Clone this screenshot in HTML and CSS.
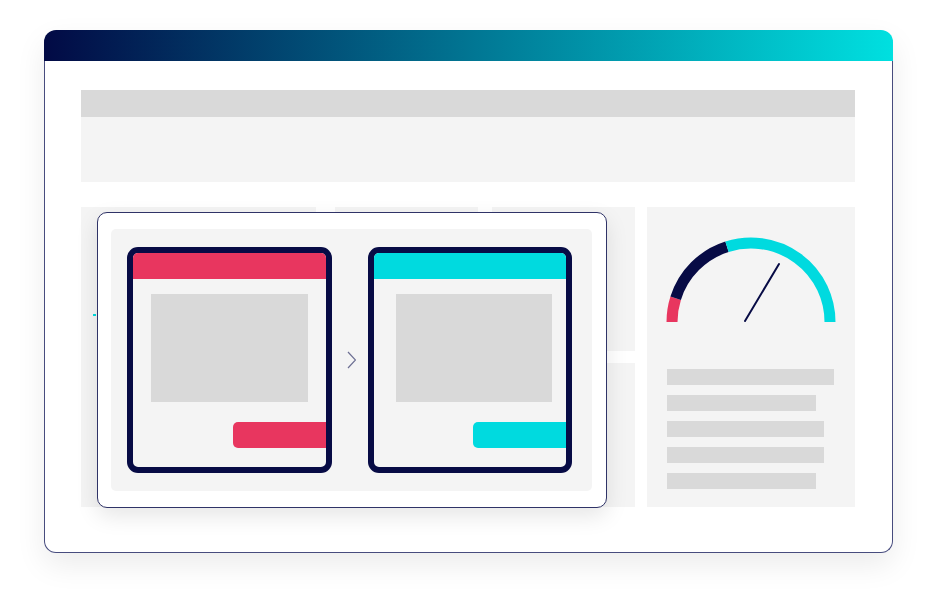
FILE: index.html
```html
<!DOCTYPE html>
<html lang="en">
<head>
<meta charset="utf-8">
<title>Dashboard illustration</title>
<link rel="stylesheet" href="styles.css">
</head>
<body>
<div class="window">
  <div class="win-head"></div>
  <div class="win-body">
    <div class="banner">
      <div class="banner-top"></div>
      <div class="banner-rest"></div>
    </div>
    <div class="grid">
      <div class="tile tile-a"><div class="dot"></div></div>
      <div class="tile tile-b"></div>
      <div class="tile tile-c"></div>
      <div class="tile tile-d"></div>
      <div class="tile tile-gauge">
        <svg class="gauge" width="208" height="125" viewBox="0 0 208 125">
          <path d="M25 115 A79 79 0 0 1 28.66 91.24" fill="none" stroke="#e8365f" stroke-width="11"/>
          <path d="M28.66 91.24 A79 79 0 0 1 80 39.74" fill="none" stroke="#070b45" stroke-width="11"/>
          <path d="M80 39.74 A79 79 0 0 1 183 115" fill="none" stroke="#00dadf" stroke-width="11"/>
          <line x1="98" y1="114" x2="132" y2="57" stroke="#070b45" stroke-width="2" stroke-linecap="round"/>
        </svg>
        <div class="bars">
          <div class="bar w167"></div>
          <div class="bar w149"></div>
          <div class="bar w157"></div>
          <div class="bar w157"></div>
          <div class="bar w149"></div>
        </div>
      </div>
      <div class="popup">
        <div class="panel">
          <div class="phone phone-pink">
            <div class="phone-head"></div>
            <div class="phone-img"></div>
            <div class="phone-btn"></div>
          </div>
          <svg class="chev" width="9" height="18" viewBox="0 0 9 18">
            <polyline points="1,1 8.5,9 1,17" fill="none" stroke="#6d6f93" stroke-width="1.2"/>
          </svg>
          <div class="phone phone-cyan">
            <div class="phone-head"></div>
            <div class="phone-img"></div>
            <div class="phone-btn"></div>
          </div>
        </div>
      </div>
    </div>
  </div>
</div>
</body>
</html>
```

FILE: styles.css
```css
* { box-sizing: border-box; }
html, body { margin: 0; padding: 0; background: #ffffff; }
body { width: 939px; height: 600px; overflow: hidden; font-family: "Liberation Sans", Arial, sans-serif; }

.window {
  width: 849px;
  margin: 30px 0 0 44px;
  border-radius: 12px;
  box-shadow: 0 12px 30px rgba(0, 0, 0, 0.08);
}
.win-head {
  height: 31px;
  border-radius: 12px 12px 0 0;
  background: linear-gradient(90deg, #020a45 0%, #00e0e0 100%);
}
.win-body {
  background: #ffffff;
  border: 1px solid #474c7e;
  border-top: 0;
  border-radius: 0 0 12px 12px;
  padding: 29px 37px 45px 36px;
}

.banner { display: flex; flex-direction: column; }
.banner-top { height: 27px; background: #d9d9d9; }
.banner-rest { height: 65px; background: #f4f4f4; }

.grid {
  position: relative;
  margin-top: 25px;
  height: 300px;
  display: grid;
  grid-template-columns: 235px 19px 143px 14px 143px 12px 208px;
  grid-template-rows: 144px 12px 144px;
}
.tile { background: #f4f4f4; }
.tile-a { grid-column: 1; grid-row: 1 / 4; padding: 107px 0 0 12px; }
.tile-b { grid-column: 3; grid-row: 1; }
.tile-c { grid-column: 5; grid-row: 1; }
.tile-d { grid-column: 3 / 6; grid-row: 3; }
.tile-gauge { grid-column: 7; grid-row: 1 / 4; display: flex; flex-direction: column; }
.dot { width: 3px; height: 2px; background: #00dadf; }

.gauge { display: block; }
.bars { display: flex; flex-direction: column; gap: 10px; margin: 37px 0 0 20px; }
.bar { height: 16px; background: #d9d9d9; }
.w167 { width: 167px; }
.w157 { width: 157px; }
.w149 { width: 149px; }

.popup {
  position: absolute;
  left: 16px;
  top: 5px;
  width: 510px;
  height: 296px;
  background: #ffffff;
  border: 1px solid #2f3367;
  border-radius: 10px;
  padding: 16px 14px 16px 13px;
  box-shadow: 0 8px 22px rgba(0, 0, 0, 0.1);
}
.panel {
  height: 100%;
  background: #f4f4f4;
  border-radius: 5px;
  display: flex;
  align-items: center;
  padding: 0 20px 0 16px;
}
.chev { display: block; margin: 0 12px 0 15px; flex: none; }

.phone {
  flex: none;
  height: 226px;
  border: 6px solid #070b45;
  border-radius: 11px;
  background: #f4f4f4;
  overflow: hidden;
  display: flex;
  flex-direction: column;
}
.phone-pink { width: 205px; }
.phone-cyan { width: 204px; }
.phone-head { height: 26px; }
.phone-pink .phone-head, .phone-pink .phone-btn { background: #e8365f; }
.phone-cyan .phone-head, .phone-cyan .phone-btn { background: #00dadf; }
.phone-img { height: 108px; margin-top: 15px; background: #d9d9d9; }
.phone-pink .phone-img { width: 157px; margin-left: 18px; }
.phone-cyan .phone-img { width: 156px; margin-left: 22px; }
.phone-btn {
  align-self: flex-end;
  width: 93px;
  height: 26px;
  margin-top: 20px;
  border-radius: 5px 0 0 5px;
}
```
